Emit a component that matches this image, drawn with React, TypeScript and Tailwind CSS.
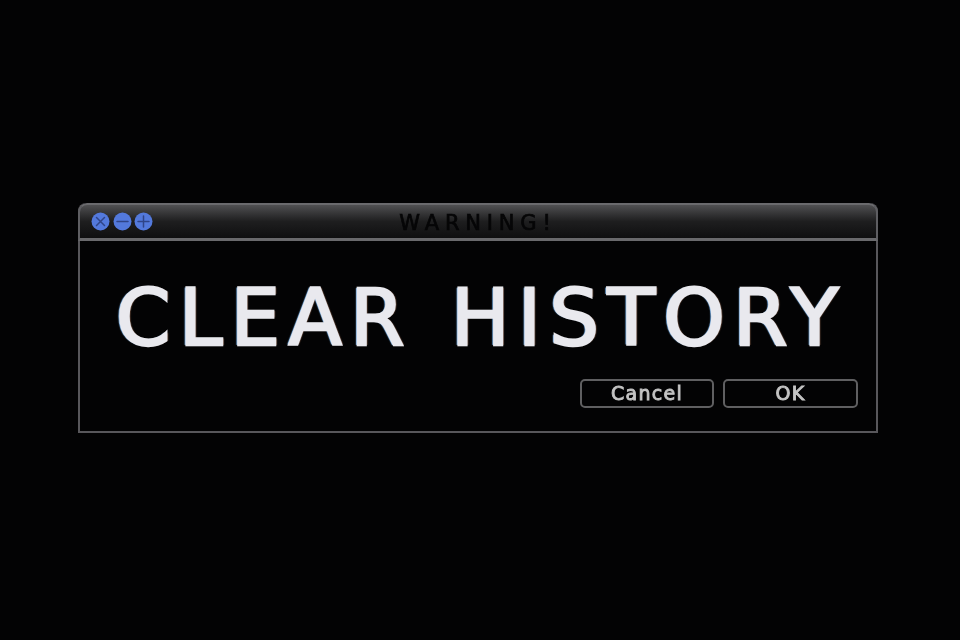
const font = { fontFamily: "'DejaVu Sans', sans-serif" };

const App = () => {
  return (
    <div className="w-[960px] h-[640px] bg-[#030304] pt-[203px] pl-[78px] overflow-hidden" style={font}>
      <div className="w-[800px] h-[230px] flex flex-col rounded-t-[8px] border-x-2 border-b-2 border-[#58575b] bg-[#030304]">
        {/* Title bar */}
        <div className="relative h-[38px] -mx-[2px] shrink-0 flex items-center justify-center rounded-t-[9px] border-x-2 border-t-2 border-b-[3px] border-x-[#5e5e62] border-t-[#6a6a6d] border-b-[#69696c] bg-gradient-to-b from-[#505052] via-[#1e1e1f] to-[#0f0f10]">
          <div className="absolute left-[11px] top-[7px] flex gap-[2.5px]">
            <TrafficButton kind="close" />
            <TrafficButton kind="minus" />
            <TrafficButton kind="plus" />
          </div>
          <span className="text-[21px] leading-[24px] tracking-[5.8px] pt-[2px] text-[#060607] [-webkit-text-stroke:0.7px_#060607] blur-[0.6px]">WARNING!</span>
        </div>

        {/* Message */}
        <div className="flex justify-center pl-[7px] pt-[22px] h-[127px] shrink-0">
          <h1 className="text-[78px] leading-[110px] font-normal tracking-[8.4px] [word-spacing:5px] whitespace-pre text-[#e9e9ee] [-webkit-text-stroke:2.4px_#e9e9ee] blur-[0.4px] [text-shadow:-2px_0_1px_#7fb4e8,2px_0_1px_#5a4033]">
            CLEAR HISTORY
          </h1>
        </div>

        {/* Buttons */}
        <div className="flex justify-end gap-[9px] pr-[18px] pt-[11px]">
          <button className="w-[134px] h-[29px] rounded-[5px] border-2 border-[#5f5f61] text-[19px] leading-[23px] tracking-[1.3px] text-[#c4c4c4] [-webkit-text-stroke:0.9px_#c4c4c4] blur-[0.4px]">
            Cancel
          </button>
          <button className="w-[135px] h-[29px] rounded-[5px] border-2 border-[#5f5f61] text-[19px] leading-[23px] tracking-[1.3px] text-[#c4c4c4] [-webkit-text-stroke:0.9px_#c4c4c4] blur-[0.4px]">
            OK
          </button>
        </div>
      </div>
    </div>
  );
};

const TrafficButton = ({ kind }: { kind: "close" | "minus" | "plus" }) => (
  <svg width="19" height="19" viewBox="0 0 19 19" className="blur-[0.5px]">
    <circle cx="9.5" cy="9.5" r="9" fill="#5379dc" />
    <g stroke="#2f4488" strokeWidth="1.5" strokeLinecap="round">
      {kind === "close" && <path d="M5.5 5.5l8 8M13.5 5.5l-8 8" />}
      {kind === "minus" && <path d="M4 9.5h11" />}
      {kind === "plus" && <path d="M4 9.5h11M9.5 4v11" />}
    </g>
  </svg>
);

export default App;
